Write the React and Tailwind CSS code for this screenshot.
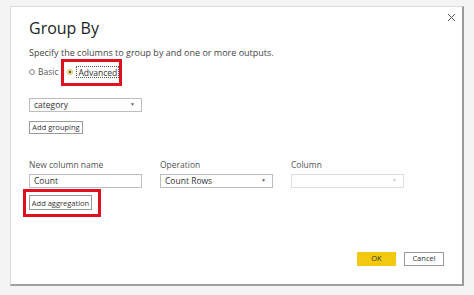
import React from 'react'

// Power Query "Group By" dialog (advanced mode) with red annotation boxes
export default function App() {
  return (
    <div className="w-[474px] h-[295px] bg-[#f4f4f4] pt-[6px] pl-[10px] font-['Open_Sans',sans-serif] text-[#333]">
      <div className="relative w-[454px] h-[280px] bg-white border border-[#dcdcdc] border-r-[2px] border-r-[#9a9a9a] border-b-[2px] border-b-[#a0a0a0] pl-[18px] pt-[11px]">
        {/* close */}
        <svg className="absolute right-[6px] top-[6px]" width="9" height="9" viewBox="0 0 9 9">
          <path d="M1 1L8 8M8 1L1 8" stroke="#555" strokeWidth="1" />
        </svg>

        <h1 className="h-[20px] leading-[20px] text-[16px] text-[#201f1e]">Group By</h1>

        <p className="mt-[8px] h-[14px] leading-[14px] text-[9px] text-[#444]">
          Specify the columns to group by and one or more outputs.
        </p>

        {/* radio row */}
        <div className="mt-[5px] h-[14px] flex items-center text-[8.5px] text-[#555]">
          <span className="w-[6px] h-[6px] rounded-full border border-[#888] bg-white" />
          <span className="ml-[3px]">Basic</span>
          <div className="relative ml-[9px] flex items-center">
            <span className="w-[6px] h-[6px] rounded-full border border-[#d8c46a] bg-[#f5e48e] flex items-center justify-center">
              <span className="w-[2px] h-[2px] rounded-full bg-[#333]" />
            </span>
            <span className="ml-[3px] px-[1px] h-[12px] leading-[11px] border border-dotted border-[#555] text-[#333]">Advanced</span>
            {/* red annotation */}
            <div className="absolute left-[-6px] top-[-7px] w-[61px] h-[27px] border-[3px] border-[#e0101e]" />
          </div>
        </div>

        {/* group by column */}
        <div className="mt-[19px] w-[113px] h-[14px] border border-[#bdbdbd] flex items-center justify-between pl-[4px] pr-[6px] text-[8.5px] text-[#333]">
          <span>category</span>
          <span className="text-[5px] text-[#666]">▼</span>
        </div>

        <button className="mt-[9px] h-[13px] w-[54px] border border-[#9a9a9a] bg-white text-[7.5px] leading-[11px] text-[#333] flex items-center justify-center">
          Add grouping
        </button>

        {/* aggregation */}
        <div className="mt-[25px] grid grid-cols-[113px_113px_113px] gap-x-[18px]">
          <div className="h-[12px] leading-[12px] text-[8.5px] text-[#555]">New column name</div>
          <div className="h-[12px] leading-[12px] text-[8.5px] text-[#555]">Operation</div>
          <div className="h-[12px] leading-[12px] text-[8.5px] text-[#555]">Column</div>

          <div className="mt-[3px] h-[14px] border border-[#bdbdbd] flex items-center pl-[4px] text-[8.5px] text-[#333]">Count</div>
          <div className="mt-[3px] h-[14px] border border-[#bdbdbd] flex items-center justify-between pl-[4px] pr-[6px] text-[8.5px] text-[#333]">
            <span>Count Rows</span>
            <span className="text-[5px] text-[#666]">▼</span>
          </div>
          <div className="mt-[3px] h-[14px] border border-[#dedede] flex items-center justify-end pr-[6px]">
            <span className="text-[5px] text-[#ccc]">▼</span>
          </div>
        </div>

        <div className="relative mt-[7px] w-[63px]">
          <button className="h-[15px] w-[63px] border border-[#9a9a9a] bg-white text-[7.5px] leading-[12px] text-[#333] flex items-center justify-center">
            Add aggregation
          </button>
          <div className="absolute left-[-6px] top-[-6px] w-[78px] h-[28px] border-[3px] border-[#e0101e]" />
        </div>

        {/* footer */}
        <div className="absolute right-[18px] top-[245px] flex gap-[8px]">
          <button className="h-[14px] w-[39px] bg-[#f2c811] text-[7.5px] text-[#333] flex items-center justify-center">OK</button>
          <button className="h-[14px] w-[40px] border border-[#9a9a9a] bg-white text-[7.5px] text-[#333] flex items-center justify-center">Cancel</button>
        </div>
      </div>
    </div>
  )
}
